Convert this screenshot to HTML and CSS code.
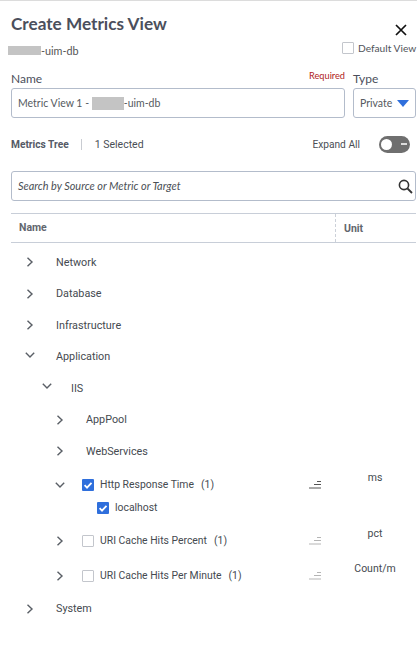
FILE: index.html
```html
<!DOCTYPE html>
<html lang="en">
<head>
<meta charset="utf-8">
<title>Create Metrics View</title>
<link rel="stylesheet" href="styles.css">
</head>
<body>
<svg class="defs" width="0" height="0" aria-hidden="true">
  <symbol id="right" viewBox="0 0 10 10"><path d="M2.5 .8 7 5 2.5 9.2" fill="none" stroke="#5a5f66" stroke-width="1.4"/></symbol>
  <symbol id="down" viewBox="0 0 10 10"><path d="M.8 2.8 5 7 9.2 2.8" fill="none" stroke="#5a5f66" stroke-width="1.4"/></symbol>
  <symbol id="tick" viewBox="0 0 12 12"><path d="M2.6 6.2 5 8.6 9.5 3.8" fill="none" stroke="#fff" stroke-width="1.8"/></symbol>
  <symbol id="handle" viewBox="0 0 12 8"><path d="M8 .5h4M5 3.5h7M0 7h12" fill="none" stroke="currentColor" stroke-width="1"/></symbol>
</svg>
<main class="panel">
  <header class="head">
    <h1 class="title">Create Metrics View</h1>
    <svg class="close" viewBox="0 0 12 12"><path d="M1 1 11 11M11 1 1 11" stroke="#111" stroke-width="1.7"/></svg>
  </header>
  <div class="sub">
    <span class="source"><span class="mask mask-a"></span>-uim-db</span>
    <label class="default"><span class="box"></span>Default View</label>
  </div>
  <div class="fields">
    <div class="field-name">
      <div class="labels"><span class="flabel">Name</span><span class="req">Required</span></div>
      <div class="input"><span>Metric View 1 -&nbsp;</span><span class="mask mask-b"></span><span>-uim-db</span></div>
    </div>
    <div class="field-type">
      <div class="labels"><span class="flabel">Type</span></div>
      <div class="input select"><span>Private</span><span class="caret"></span></div>
    </div>
  </div>
  <div class="toolbar">
    <strong class="tree-title">Metrics Tree</strong>
    <span class="sep"></span>
    <span class="selected">1 Selected</span>
    <span class="expand">Expand All</span>
    <span class="toggle"><span class="knob"></span><span class="dash"></span></span>
  </div>
  <div class="search">
    <em>Search by Source or Metric or Target</em>
    <svg class="lens" viewBox="0 0 15 15"><circle cx="6" cy="6" r="4.6" fill="none" stroke="#333" stroke-width="1.6"/><path d="M9.5 9.5 14 14" stroke="#333" stroke-width="1.8"/></svg>
  </div>
  <div class="thead"><span class="th-name">Name</span><span class="th-unit">Unit</span></div>
  <div class="tree">
    <div class="row l0"><svg class="chev"><use href="#right"/></svg><span>Network</span></div>
    <div class="row l0"><svg class="chev"><use href="#right"/></svg><span>Database</span></div>
    <div class="row l0"><svg class="chev"><use href="#right"/></svg><span>Infrastructure</span></div>
    <div class="row l0"><svg class="chev dn"><use href="#down"/></svg><span>Application</span></div>
    <div class="row l1"><svg class="chev dn"><use href="#down"/></svg><span>IIS</span></div>
    <div class="row l2"><svg class="chev"><use href="#right"/></svg><span>AppPool</span></div>
    <div class="row l2"><svg class="chev"><use href="#right"/></svg><span>WebServices</span></div>
    <div class="mrow m-http">
      <svg class="chev"><use href="#down"/></svg>
      <span class="check on"><svg class="tick"><use href="#tick"/></svg></span>
      <span class="mname">Http Response Time<span class="count">(1)</span></span>
      <svg class="handle dark"><use href="#handle"/></svg>
      <span class="unit">ms</span>
    </div>
    <div class="mrow m-child">
      <span class="check on"><svg class="tick"><use href="#tick"/></svg></span>
      <span class="mname">localhost</span>
    </div>
    <div class="mrow m-pct">
      <svg class="chev"><use href="#right"/></svg>
      <span class="check"></span>
      <span class="mname">URI Cache Hits Percent<span class="count">(1)</span></span>
      <svg class="handle"><use href="#handle"/></svg>
      <span class="unit">pct</span>
    </div>
    <div class="mrow m-count">
      <svg class="chev"><use href="#right"/></svg>
      <span class="check"></span>
      <span class="mname">URI Cache Hits Per Minute<span class="count">(1)</span></span>
      <svg class="handle"><use href="#handle"/></svg>
      <span class="unit">Count/m</span>
    </div>
    <div class="row l0 sys"><svg class="chev"><use href="#right"/></svg><span>System</span></div>
  </div>
</main>
</body>
</html>
```
FILE: styles.css
```css
* { box-sizing: border-box; }
html, body { margin: 0; padding: 0; background: #fff; }
body { width: 417px; height: 652px; overflow: hidden; font-family: Roboto, sans-serif; color: #3f444b; }
.defs { display: block; height: 0; }
.panel { border-top: 1px solid #dcdcdc; padding: 0 1px 0 11px; height: 652px; overflow: hidden; }

.head { display: flex; justify-content: space-between; height: 37px; padding-top: 11px; }
.title { margin: 0; font: 700 17.2px/24px Lato, sans-serif; color: #4b4f5c; }
.close { width: 12px; height: 12px; margin: 12px 9px 0 0; }

.sub { display: flex; justify-content: space-between; height: 26px; margin-left: -3px; }
.source { display: flex; align-items: center; height: 24px; font: 10.8px Lato, sans-serif; color: #555; padding-top: 1px; }
.mask { display: inline-block; background: #c4c4c4; filter: blur(.5px); }
.mask-a { width: 33px; height: 9px; }
.mask-b { width: 32px; height: 13px; }
.default { display: flex; align-items: center; gap: 4px; height: 20px; width: 74px; white-space: nowrap; font: 10.2px Lato, sans-serif; color: #4f5359; }
.box { width: 12px; height: 12px; border: 1px solid #c3c6cc; border-radius: 1px; flex: none; }

.fields { display: flex; gap: 8px; }
.field-name { width: 334px; }
.field-type { width: 63px; }
.labels { display: flex; justify-content: space-between; height: 24px; padding-top: 7px; }
.flabel { font: 12px/16px Lato, sans-serif; color: #4b4f5c; }
.req { font: 9.2px/10px Lato, sans-serif; color: #b01c1c; }
.input { display: flex; align-items: center; height: 30px; padding: 0 6px; border: 1px solid #b3bccb; border-radius: 3px; font: 10.5px Lato, sans-serif; color: #555a60; white-space: nowrap; }
.select { justify-content: space-between; }
.caret { width: 0; height: 0; border-left: 6px solid transparent; border-right: 6px solid transparent; border-top: 7px solid #2f6fdc; margin: 1px 0 0 0; }

.toolbar { display: flex; align-items: center; height: 20px; margin-top: 16px; }
.tree-title { font: 700 10.2px Roboto, sans-serif; color: #555a66; }
.sep { width: 1px; height: 11px; margin: 0 12.5px; background: #c9ccd2; }
.selected { font-size: 10.5px; color: #4a4f55; }
.expand { margin-left: auto; font: 10.2px Roboto, sans-serif; color: #4a4f55; }
.toggle { display: flex; align-items: center; justify-content: space-between; width: 31px; height: 17px; margin: 0 6px 0 19px; padding: 0 3px 0 2px; border-radius: 9px; background: #6f6f6f; }
.knob { width: 11px; height: 11px; border-radius: 50%; background: #fff; }
.dash { width: 6px; height: 2px; background: #ddd; }

.search { display: flex; align-items: center; justify-content: space-between; height: 30px; margin-top: 17px; padding: 0 2px 0 6px; border: 1px solid #b3bccb; border-radius: 3px; }
.search em { font: italic 10.9px Lato, sans-serif; color: #4a4f55; padding-bottom: 2px; }
.lens { width: 15px; height: 15px; }

.thead { display: flex; align-items: center; height: 30px; margin-top: 12px; border-top: 1px solid #c8ced8; border-bottom: 1px solid #c8ced8; font: 700 10.5px Roboto, sans-serif; color: #62666e; }
.th-name { width: 325px; height: 100%; padding: 7px 0 0 8px; border-right: 1px dashed #ccd1d9; }
.th-unit { padding-left: 8px; }

.tree { padding-top: 3.5px; font-size: 10.8px; }
.row { display: flex; align-items: center; height: 31.5px; color: #454a50; }
.chev { width: 10px; height: 10px; flex: none; }
.chev.dn { margin-bottom: 4px; }
.l0 .chev { margin-left: 14px; }
.l0 span { margin-left: 21px; }
.l1 .chev { margin-left: 31px; }
.l1 span { margin-left: 19px; }
.l2 .chev { margin-left: 44px; }
.l2 span { margin-left: 21px; }

.mrow { display: flex; align-items: center; height: 24px; color: #454a50; font-size: 10.4px; }
.mrow .chev { margin: 0 17px 0 44px; }
.m-http { margin-top: 5.5px; }
.m-child { height: 22px; padding-left: 86px; }
.m-pct { margin-top: 10px; }
.m-count { margin-top: 11px; }
.sys { height: 24px; margin-top: 9px; }

.check { display: flex; width: 12px; height: 12px; flex: none; border: 1px solid #c3c6cc; border-radius: 1px; }
.check.on { border: 0; background: #2f6fdc; }
.tick { width: 12px; height: 12px; }
.mname { margin-left: 6px; white-space: nowrap; width: 209px; }
.count { margin-left: 7px; }
.handle { width: 12px; height: 8px; flex: none; color: #b5b5b5; }
.handle.dark { color: #555; }
.unit { align-self: flex-start; width: 56px; margin-left: 26px; height: 10px; font-size: 10.5px; line-height: 10px; text-align: center; }
.m-child .mname { width: auto; }
```
